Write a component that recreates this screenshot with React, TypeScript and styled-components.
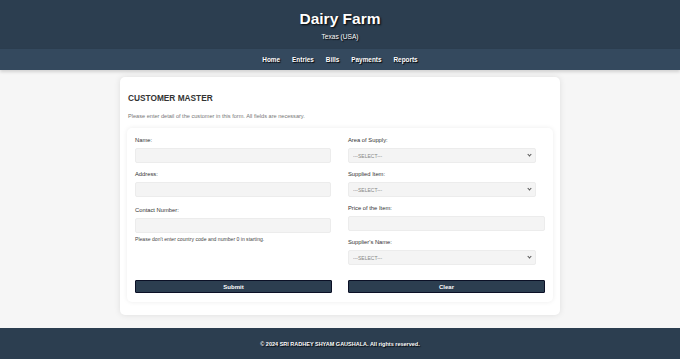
import styled, { createGlobalStyle } from "styled-components";

const GlobalStyle = createGlobalStyle`
    html, body {
        margin: 0;
        padding: 0;
        background: #f6f6f6;
        font-family: "Liberation Sans", Arial, sans-serif;
    }
    * {
        box-sizing: border-box;
    }
`;

const Page = styled.div`
    min-height: 359px;
    display: flex;
    flex-direction: column;
`;

const Header = styled.header`
    background-color: #2c3e50;
    color: #fff;
    text-align: center;
    height: 49px;
    padding-top: 9px;
`;

const SiteTitle = styled.h1`
    margin: 0;
    font-size: 15.5px;
    line-height: 19px;
    font-weight: bold;
    text-shadow: 1px 1px 2px #000;
`;

const SubTitle = styled.p`
    margin: 4px 0 0;
    font-size: 6.6px;
    line-height: 9px;
    text-shadow: 1px 1px 1px #000;
`;

const Nav = styled.nav`
    background-color: #34495e;
    height: 21px;
    display: flex;
    justify-content: center;
    align-items: center;
    gap: 12px;
    box-shadow: 0 2px 3px rgba(0, 0, 0, 0.15);
`;

const NavLink = styled.a`
    color: #fff;
    font-size: 6.4px;
    font-weight: bold;
    text-decoration: none;
    text-shadow: 1px 1px 1px #000;
`;

const Main = styled.main`
    flex: 1;
    padding: 7px 0 13px;
`;

const Card = styled.section`
    width: 440px;
    margin: 0 auto;
    background: #fff;
    border-radius: 5px;
    box-shadow: 0 0 6px rgba(0, 0, 0, 0.1);
    padding: 16px 7px 13px 7px;
`;

const CardTitle = styled.h2`
    margin: 0 0 0 1px;
    font-size: 8.3px;
    line-height: 10px;
    font-weight: bold;
    color: #333;
`;

const Description = styled.p`
    margin: 10px 0 0 1px;
    font-size: 5.6px;
    line-height: 7px;
    color: #777;
`;

const FormBox = styled.form`
    margin-top: 8px;
    background: #fff;
    border-radius: 5px;
    box-shadow: 0 0 5px rgba(0, 0, 0, 0.08);
    padding: 8px 8px 9px;
`;

const Columns = styled.div`
    display: grid;
    grid-template-columns: 196px 197px;
    column-gap: 17px;
`;

const Column = styled.div`
    display: flex;
    flex-direction: column;
`;

const Label = styled.label`
    display: block;
    font-size: 5.8px;
    line-height: 8px;
    color: #333;
    margin-bottom: 4px;
`;

const Field = styled.input<{ $gap?: number }>`
    display: block;
    width: 100%;
    height: 15px;
    margin: 0 0 ${(p) => p.$gap ?? 7}px;
    padding: 0 4px;
    background: #f4f4f4;
    border: 1px solid #ececec;
    border-radius: 2px;
    font-size: 6px;
`;

const SelectWrap = styled.div`
    position: relative;
    width: 188px;
    margin: 0 0 7px;

    &::after {
        content: "";
        position: absolute;
        right: 5px;
        top: 5px;
        width: 2px;
        height: 2px;
        border-right: 1px solid #555;
        border-bottom: 1px solid #555;
        transform: rotate(45deg);
        pointer-events: none;
    }
`;

const Select = styled.select`
    display: block;
    width: 100%;
    height: 15px;
    padding: 0 4px;
    appearance: none;
    background: #f4f4f4;
    border: 1px solid #ececec;
    border-radius: 2px;
    font-family: "Liberation Sans", Arial, sans-serif;
    font-size: 5px;
    color: #888;
`;

const Hint = styled.small`
    display: block;
    margin-top: -4px;
    font-size: 5.1px;
    line-height: 6px;
    color: #444;
`;

const Buttons = styled.div`
    display: grid;
    grid-template-columns: 197px 197px;
    column-gap: 16px;
    margin-top: 8px;
`;

const Button = styled.button`
    height: 13px;
    background-color: #2c3e50;
    color: #fff;
    border: 1px solid #0b1026;
    border-radius: 1px;
    font-family: "Liberation Sans", Arial, sans-serif;
    font-size: 6px;
    font-weight: bold;
    cursor: pointer;
`;

const Footer = styled.footer`
    background-color: #2c3e50;
    height: 31px;
    display: flex;
    justify-content: center;
    align-items: center;
    color: #fff;
    font-size: 5.5px;
    font-weight: bold;
    text-shadow: 1px 1px 1px #000;
`;

const options = ["---SELECT---"];

function Dropdown() {
    return (
        <SelectWrap>
            <Select>
                {options.map((o) => (
                    <option key={o}>{o}</option>
                ))}
            </Select>
        </SelectWrap>
    );
}

function App() {
    return (
        <Page>
            <GlobalStyle />
            <Header>
                <SiteTitle>Dairy Farm</SiteTitle>
                <SubTitle>Texas (USA)</SubTitle>
            </Header>
            <Nav>
                {["Home", "Entries", "Bills", "Payments", "Reports"].map((item) => (
                    <NavLink key={item} href="#">
                        {item}
                    </NavLink>
                ))}
            </Nav>
            <Main>
                <Card>
                    <CardTitle>CUSTOMER MASTER</CardTitle>
                    <Description>
                        Please enter detail of the customer in this form. All fields are necessary.
                    </Description>
                    <FormBox onSubmit={(e) => e.preventDefault()}>
                        <Columns>
                            <Column>
                                <Label>Name:</Label>
                                <Field type="text" $gap={7} />
                                <Label>Address:</Label>
                                <Field type="text" $gap={9} />
                                <Label>Contact Number:</Label>
                                <Field type="text" />
                                <Hint>Please don't enter country code and number 0 in starting.</Hint>
                            </Column>
                            <Column>
                                <Label>Area of Supply:</Label>
                                <Dropdown />
                                <Label>Supplied Item:</Label>
                                <Dropdown />
                                <Label>Price of the Item:</Label>
                                <Field type="text" />
                                <Label>Supplier's Name:</Label>
                                <Dropdown />
                            </Column>
                        </Columns>
                        <Buttons>
                            <Button type="submit">Submit</Button>
                            <Button type="reset">Clear</Button>
                        </Buttons>
                    </FormBox>
                </Card>
            </Main>
            <Footer>© 2024 SRI RADHEY SHYAM GAUSHALA. All rights reserved.</Footer>
        </Page>
    );
}

export default App;
